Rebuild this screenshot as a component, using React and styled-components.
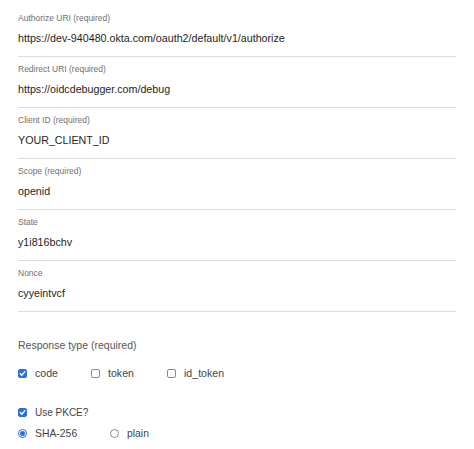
import React from "react";
import styled, { createGlobalStyle } from "styled-components";

const Global = createGlobalStyle`
  html, body { margin: 0; padding: 0; background: #fff; }
  body { font-family: "Liberation Sans", Arial, Helvetica, sans-serif; color: #222; }
`;

const Page = styled.div`
  padding: 6px 18px 0 18px;
  width: 438px;
`;

const Field = styled.div`
  padding: 6px 0 9px;
  border-bottom: 1px solid #dcdcdc;
`;

const Label = styled.div`
  font-size: 8.5px;
  line-height: 12px;
  color: #707070;
`;

const Value = styled.div`
  margin-top: 5px;
  font-size: 10.7px;
  line-height: 18px;
  color: #1e1e1e;
`;

const SectionTitle = styled.div`
  margin-top: 26px;
  font-size: 10.5px;
  line-height: 14px;
  color: #555;
`;

const OptionRow = styled.div`
  display: flex;
  align-items: center;
  margin-top: ${(p) => p.$mt || 0}px;
  height: 18px;
`;

const Option = styled.label`
  display: flex;
  align-items: center;
  width: ${(p) => p.$w || 76}px;
  font-size: ${(p) => p.$fs || 10.6}px;
  color: #444;
`;

const Box = styled.span`
  width: 9px;
  height: 9px;
  box-sizing: border-box;
  border-radius: 2px;
  margin-right: 8px;
  display: inline-flex;
  align-items: center;
  justify-content: center;
  background: ${(p) => (p.$on ? "#2a6fdb" : "#fff")};
  border: 1px solid ${(p) => (p.$on ? "#2a6fdb" : "#8a8a8a")};
`;

const Radio = styled.span`
  width: 9px;
  height: 9px;
  box-sizing: border-box;
  border-radius: 50%;
  margin-right: 8px;
  display: inline-flex;
  align-items: center;
  justify-content: center;
  border: 1px solid ${(p) => (p.$on ? "#2a6fdb" : "#8a8a8a")};
  background: #fff;
  &::after {
    content: "";
    display: ${(p) => (p.$on ? "block" : "none")};
    width: 5px;
    height: 5px;
    border-radius: 50%;
    background: #2a6fdb;
  }
`;

const Check = () => (
  <svg width="7" height="7" viewBox="0 0 7 7">
    <path d="M1.2 3.6 L2.8 5.2 L5.9 1.6" fill="none" stroke="#fff" strokeWidth="1.4" strokeLinecap="round" strokeLinejoin="round" />
  </svg>
);

const fields = [
  ["Authorize URI (required)", "https://dev-940480.okta.com/oauth2/default/v1/authorize"],
  ["Redirect URI (required)", "https://oidcdebugger.com/debug"],
  ["Client ID (required)", "YOUR_CLIENT_ID"],
  ["Scope (required)", "openid"],
  ["State", "y1i816bchv"],
  ["Nonce", "cyyeintvcf"],
];

export default function App() {
  return (
    <>
      <Global />
      <Page>
        {fields.map(([l, v]) => (
          <Field key={l}>
            <Label>{l}</Label>
            <Value>{v}</Value>
          </Field>
        ))}
        <SectionTitle>Response type (required)</SectionTitle>
        <OptionRow $mt={12}>
          <Option $w={73}><Box $on><Check /></Box>code</Option>
          <Option $w={76}><Box />token</Option>
          <Option $w={90}><Box />id_token</Option>
        </OptionRow>
        <OptionRow $mt={21}>
          <Option $w={120} $fs={10}><Box $on><Check /></Box>Use PKCE?</Option>
        </OptionRow>
        <OptionRow $mt={3}>
          <Option $w={92} $fs={10.4}><Radio $on />SHA-256</Option>
          <Option $w={60} $fs={10.4}><Radio />plain</Option>
        </OptionRow>
      </Page>
    </>
  );
}
